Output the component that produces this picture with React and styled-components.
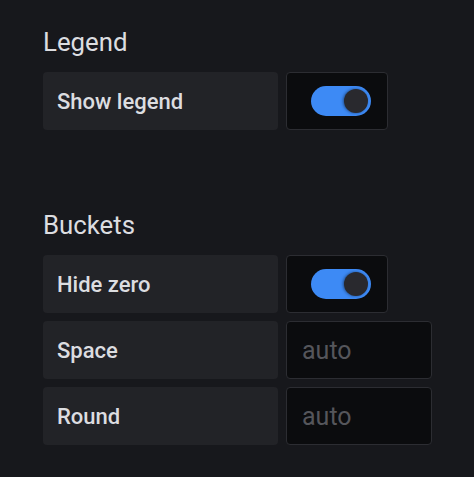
import React from 'react';
import styled, { createGlobalStyle } from 'styled-components';

const GlobalStyle = createGlobalStyle`
  html, body {
    margin: 0;
    padding: 0;
    background: #17181c;
  }
  body {
    font-family: Roboto, "Liberation Sans", sans-serif;
  }
`;

const Panel = styled.div`
  width: 474px;
  height: 477px;
  box-sizing: border-box;
  padding: 26px 0 0 43px;
  background: #17181c;
  color: #d8d9dc;
`;

const Section = styled.section`
  display: flex;
  flex-direction: column;
  gap: 8px;
  margin-bottom: ${(p) => p.$spaceAfter || 0}px;
`;

const Heading = styled.h3`
  margin: 0 0 6px;
  font-size: 25.8px;
  font-weight: 400;
  line-height: 32px;
  color: #dcdde0;
`;

const Row = styled.div`
  display: flex;
  gap: 8px;
`;

const Label = styled.div`
  display: flex;
  align-items: center;
  box-sizing: border-box;
  width: 235px;
  height: 58px;
  padding: 0 14px;
  border-radius: 4px;
  background: #222327;
  font-size: 22px;
  font-weight: 500;
  color: #dcdde0;
`;

const SwitchBox = styled.div`
  display: flex;
  align-items: center;
  justify-content: center;
  box-sizing: border-box;
  width: 102px;
  height: 58px;
  padding-left: 8px;
  border: 1px solid #2c2d32;
  border-radius: 4px;
  background: #0b0c0e;
`;

const Track = styled.div`
  position: relative;
  width: 60px;
  height: 30px;
  border-radius: 15px;
  background: ${(p) => (p.$on ? '#3d8af5' : '#2c2d32')};
`;

const Knob = styled.span`
  position: absolute;
  top: 3px;
  ${(p) => (p.$on ? 'right: 3px;' : 'left: 3px;')}
  width: 24px;
  height: 24px;
  border-radius: 50%;
  background: #29292e;
  box-shadow: -1px 0 3px rgba(0, 0, 0, 0.45);
`;

const Input = styled.input`
  box-sizing: border-box;
  width: 146px;
  height: 58px;
  padding: 0 15px;
  border: 1px solid #2c2d32;
  border-radius: 4px;
  background: #0b0c0e;
  font-family: Roboto, "Liberation Sans", sans-serif;
  font-size: 25px;
  color: #d8d9dc;
  outline: none;

  &::placeholder {
    color: #55565b;
  }
`;

const Switch = ({ on }) => (
  <SwitchBox>
    <Track $on={on}>
      <Knob $on={on} />
    </Track>
  </SwitchBox>
);

const App = () => (
  <>
    <GlobalStyle />
    <Panel>
      <Section $spaceAfter={79}>
        <Heading>Legend</Heading>
        <Row>
          <Label>Show legend</Label>
          <Switch on />
        </Row>
      </Section>
      <Section>
        <Heading>Buckets</Heading>
        <Row>
          <Label>Hide zero</Label>
          <Switch on />
        </Row>
        <Row>
          <Label>Space</Label>
          <Input placeholder="auto" />
        </Row>
        <Row>
          <Label>Round</Label>
          <Input placeholder="auto" />
        </Row>
      </Section>
    </Panel>
  </>
);

export default App;
